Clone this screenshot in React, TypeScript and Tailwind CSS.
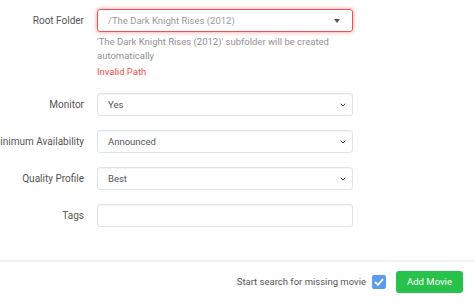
import React from 'react';
import { ChevronDown } from 'lucide-react';

const labelCls =
  'w-[84px] shrink-0 h-[23px] flex items-center justify-end whitespace-nowrap text-[#555] text-[10px]';

function SelectBox({ value }: { value: string }) {
  return (
    <div className="ml-[13px] w-[256px] h-[23px] flex items-center justify-between border border-[#dde6e9] rounded-[3px] pl-[10px] pr-[5px] shadow-[inset_0_1px_1px_rgba(0,0,0,0.05)]">
      <span className="text-[#555]">{value}</span>
      <ChevronDown className="h-[8px] w-[8px] text-[#444]" strokeWidth={3} />
    </div>
  );
}

export default function App() {
  return (
    <div className="w-[474px] h-[303px] bg-white overflow-hidden font-['Roboto',sans-serif] text-[9.5px] leading-[14px]">
      <div className="pt-[9px] flex flex-col gap-[14px]">
        {/* Root folder */}
        <div className="flex">
          <div className={labelCls}>Root Folder</div>
          <div className="ml-[13px] w-[256px]">
            <div className="h-[23px] flex items-center justify-between border border-[#f05050] rounded-[3px] pl-[10px] pr-[12px] shadow-[0_0_4px_rgba(240,80,80,0.6)]">
              <span className="text-[#999]">/The Dark Knight Rises (2012)</span>
              <svg width="6" height="4" viewBox="0 0 6 4">
                <path d="M0 0 L6 0 L3 4 Z" fill="#555" />
              </svg>
            </div>
            <div className="mt-[3px] text-[#909293]">
              'The Dark Knight Rises (2012)' subfolder will be created automatically
            </div>
            <div className="mt-[2px] text-[#f05050]">Invalid Path</div>
          </div>
        </div>

        <div className="flex">
          <div className={labelCls}>Monitor</div>
          <SelectBox value="Yes" />
        </div>

        <div className="flex">
          <div className={labelCls}>Minimum Availability</div>
          <SelectBox value="Announced" />
        </div>

        <div className="flex">
          <div className={labelCls}>Quality Profile</div>
          <SelectBox value="Best" />
        </div>

        <div className="flex">
          <div className={labelCls}>Tags</div>
          <div className="ml-[13px] w-[256px] h-[23px] border border-[#dde6e9] rounded-[3px] shadow-[inset_0_1px_1px_rgba(0,0,0,0.05)]" />
        </div>
      </div>

      {/* Footer */}
      <div className="mt-[33px] border-t-2 border-[#f1f1f1] h-[42px] flex items-center justify-end pr-[11px]">
        <span className="text-[#555]">Start search for missing movie</span>
        <div className="ml-[6px] w-[14px] h-[14px] rounded-[2px] bg-[#5b9bf0] flex items-center justify-center">
          <svg width="10" height="8" viewBox="0 0 10 8">
            <path d="M1 4 L4 6.8 L9 1.2" stroke="white" strokeWidth="1.8" fill="none" />
          </svg>
        </div>
        <button className="ml-[10px] w-[67px] h-[22px] rounded-[3px] bg-[#27c24c] text-white">
          Add Movie
        </button>
      </div>
    </div>
  );
}
